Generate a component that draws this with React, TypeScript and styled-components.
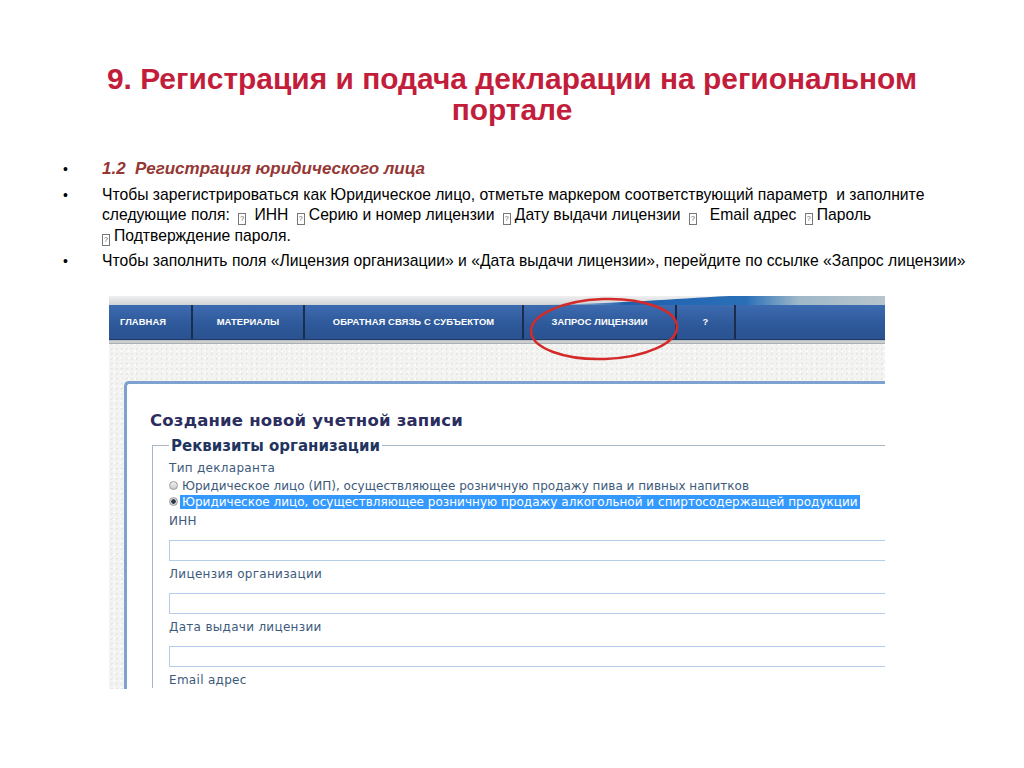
import styled, { createGlobalStyle } from 'styled-components'

const GlobalStyle = createGlobalStyle`
  html, body {
    margin: 0;
    padding: 0;
    background: #ffffff;
  }
  * {
    box-sizing: border-box;
  }
`

const Slide = styled.div`
  width: 1024px;
  height: 768px;
  overflow: hidden;
  padding-top: 63px;
  font-family: 'Liberation Sans', Arial, sans-serif;
  color: #000;
`

const Title = styled.h1`
  margin: 0;
  text-align: center;
  font-size: 29.9px;
  line-height: 31px;
  font-weight: 700;
  color: #c21d3b;
`

const Bullets = styled.ul`
  list-style: none;
  margin: 34px 0 0;
  padding: 0 20px 0 102px;
`

const Item = styled.li<{ $gap?: number }>`
  position: relative;
  font-size: 15.7px;
  line-height: 20.5px;
  white-space: nowrap;
  margin-top: ${(p) => p.$gap ?? 5}px;
  &::before {
    content: '•';
    position: absolute;
    left: -39px;
    top: 0;
    font-size: 14px;
  }
`

const SubTitle = styled.span`
  font-size: 17px;
  font-weight: 700;
  font-style: italic;
  color: #953735;
`

// the "missing glyph" boxes of the original slide
const Tofu = styled.span<{ $first?: boolean }>`
  display: inline-block;
  width: 8px;
  height: 12px;
  border: 1px solid #777;
  font-size: 7px;
  line-height: 10px;
  text-align: center;
  vertical-align: -1px;
  color: #555;
  margin: 0 4px 0 ${(p) => (p.$first ? 0 : 4)}px;
`

const Shot = styled.div`
  position: relative;
  width: 776px;
  height: 393px;
  margin: 24px 0 0 109px;
  overflow: hidden;
  background-color: #f3f3f1;
  background-image: radial-gradient(rgba(0, 0, 0, 0.06) 1px, transparent 1px),
    radial-gradient(rgba(255, 255, 255, 0.9) 1px, transparent 1px);
  background-size: 5px 5px, 7px 7px;
  background-position: 0 0, 2px 3px;
  font-family: 'DejaVu Sans', Verdana, sans-serif;
`

const TopStrip = styled.div`
  height: 9px;
  background: linear-gradient(#f0f0f0, #cfd2d4);
  svg {
    display: block;
  }
`

const NavBar = styled.div`
  display: flex;
  height: 35px;
  background: linear-gradient(#3d6bb0, #2d5899 60%, #2a5290);
  border-bottom: 1px solid #1e3a66;
`

const NavItem = styled.div<{ $w: number; $start?: boolean }>`
  display: flex;
  align-items: center;
  justify-content: ${(p) => (p.$start ? 'flex-start' : 'center')};
  padding-left: ${(p) => (p.$start ? 11 : 0)}px;
  width: ${(p) => p.$w}px;
  color: #ffffff;
  font-family: 'Liberation Sans', Arial, sans-serif;
  font-size: 9.4px;
  font-weight: 700;
  letter-spacing: 0.1px;
  border-right: 2px solid #1b2d4a;
`

const NavRule = styled.div`
  height: 4px;
  background: linear-gradient(#aeb2b6, #d8dadb 50%, #9ea3a7);
`

const Body = styled.div`
  padding: 37px 0 0 15px;
`

const Panel = styled.div`
  width: 900px;
  height: 320px;
  background: #ffffff;
  border-top: 3px solid #7da2d0;
  border-left: 3px solid #7da2d0;
  border-top-left-radius: 5px;
  padding: 27px 0 0 23px;
`

const PanelTitle = styled.h2`
  margin: 0;
  font-size: 16.5px;
  line-height: 20px;
  font-weight: 700;
  color: #2b2d5e;
  letter-spacing: 0.2px;
`

const Fieldset = styled.fieldset`
  margin: 7px 0 0 2px;
  padding: 6px 0 0 16px;
  border: none;
  border-top: 1px solid #a9b6c6;
  border-left: 1px solid #a9b6c6;
  min-width: 0;
`

const Legend = styled.legend`
  padding: 0 2px;
  margin-left: 0;
  font-size: 15px;
  line-height: 16px;
  font-weight: 700;
  color: #1f3560;
`

const Label = styled.div<{ $top?: number }>`
  font-size: 12px;
  line-height: 16px;
  color: #3d5a7c;
  letter-spacing: 0.3px;
  margin-top: ${(p) => p.$top ?? 0}px;
`

const RadioRow = styled.div<{ $top?: number }>`
  display: flex;
  align-items: center;
  height: 16px;
  margin-top: ${(p) => p.$top ?? 0}px;
`

const Radio = styled.span<{ $on?: boolean }>`
  width: 9px;
  height: 9px;
  border-radius: 50%;
  margin: 0 2px 0 0;
  border: 1px solid #9a9a9a;
  background: ${(p) =>
    p.$on
      ? 'radial-gradient(circle, #2c3a4a 0 2px, #d8d8d8 2.5px)'
      : 'linear-gradient(#f2f2f2, #c9c9c9)'};
`

const RadioText = styled.span<{ $on?: boolean }>`
  font-size: 12px;
  line-height: 14px;
  letter-spacing: 0.02px;
  padding: 0 2px;
  color: ${(p) => (p.$on ? '#ffffff' : '#3d5a7c')};
  background: ${(p) => (p.$on ? '#3399ff' : 'transparent')};
`

const Input = styled.div`
  width: 740px;
  height: 21px;
  margin: 11px 0 5px;
  border: 1px solid #b5cde8;
  background: #ffffff;
`

const Ellipse = styled.svg`
  position: absolute;
  left: 409px;
  top: 0;
  pointer-events: none;
`

const navItems = [
  { label: 'ГЛАВНАЯ', w: 84 },
  { label: 'МАТЕРИАЛЫ', w: 112 },
  { label: 'ОБРАТНАЯ СВЯЗЬ С СУБЪЕКТОМ', w: 219 },
  { label: 'ЗАПРОС ЛИЦЕНЗИИ', w: 153 },
  { label: '?', w: 59 },
]

export default function App() {
  return (
    <>
      <GlobalStyle />
      <Slide>
        <Title>
          9. Регистрация и подача декларации на региональном
          <br />
          портале
        </Title>

        <Bullets>
          <Item $gap={0}>
            <SubTitle>1.2&nbsp; Регистрация юридического лица</SubTitle>
          </Item>
          <Item $gap={5}>
            Чтобы зарегистрироваться как Юридическое лицо, отметьте маркером соответствующий параметр&nbsp; и заполните
            <br />
            следующие поля: <Tofu>?</Tofu> ИНН <Tofu>?</Tofu>Серию и номер лицензии <Tofu>?</Tofu>Дату выдачи лицензии{' '}
            <Tofu>?</Tofu>&nbsp; Email адрес <Tofu>?</Tofu>Пароль
            <br />
            <Tofu $first>?</Tofu>Подтверждение пароля.
          </Item>
          <Item $gap={5}>
            Чтобы заполнить поля «Лицензия организации» и «Дата выдачи лицензии», перейдите по ссылке «Запрос лицензии»
          </Item>
        </Bullets>

        <Shot>
          <TopStrip>
            <svg width="776" height="9" viewBox="0 0 776 9">
              <defs>
                <linearGradient id="sw" x1="0" x2="1" y1="0" y2="0">
                  <stop offset="0" stopColor="#2f6fb8" stopOpacity="0" />
                  <stop offset="0.25" stopColor="#1f5fae" />
                  <stop offset="0.6" stopColor="#2a70b8" />
                  <stop offset="0.75" stopColor="#9fb8c8" />
                  <stop offset="1" stopColor="#b8c4cc" />
                </linearGradient>
              </defs>
              <path d="M430 9 C 520 7, 560 3, 620 0 L 776 0 L 776 9 Z" fill="url(#sw)" />
            </svg>
          </TopStrip>
          <NavBar>
            {navItems.map((n, i) => (
              <NavItem key={n.label} $w={n.w} $start={i === 0}>
                {n.label}
              </NavItem>
            ))}
          </NavBar>
          <NavRule />

          <Body>
            <Panel>
              <PanelTitle>Создание новой учетной записи</PanelTitle>
              <Fieldset>
                <Legend>Реквизиты организации</Legend>
                <Label>Тип декларанта</Label>
                <RadioRow $top={2}>
                  <Radio />
                  <RadioText>Юридическое лицо (ИП), осуществляющее розничную продажу пива и пивных напитков</RadioText>
                </RadioRow>
                <RadioRow>
                  <Radio $on />
                  <RadioText $on>
                    Юридическое лицо, осуществляющее розничную продажу алкогольной и спиртосодержащей продукции
                  </RadioText>
                </RadioRow>
                <Label $top={3}>ИНН</Label>
                <Input />
                <Label>Лицензия организации</Label>
                <Input />
                <Label>Дата выдачи лицензии</Label>
                <Input />
                <Label>Email адрес</Label>
              </Fieldset>
            </Panel>
          </Body>

          <Ellipse width="172" height="70" viewBox="0 0 172 70">
            <ellipse cx="86" cy="33" rx="73" ry="30" fill="none" stroke="#d42a2a" strokeWidth="2.5" transform="rotate(-2 86 33)" />
          </Ellipse>
        </Shot>
      </Slide>
    </>
  )
}
